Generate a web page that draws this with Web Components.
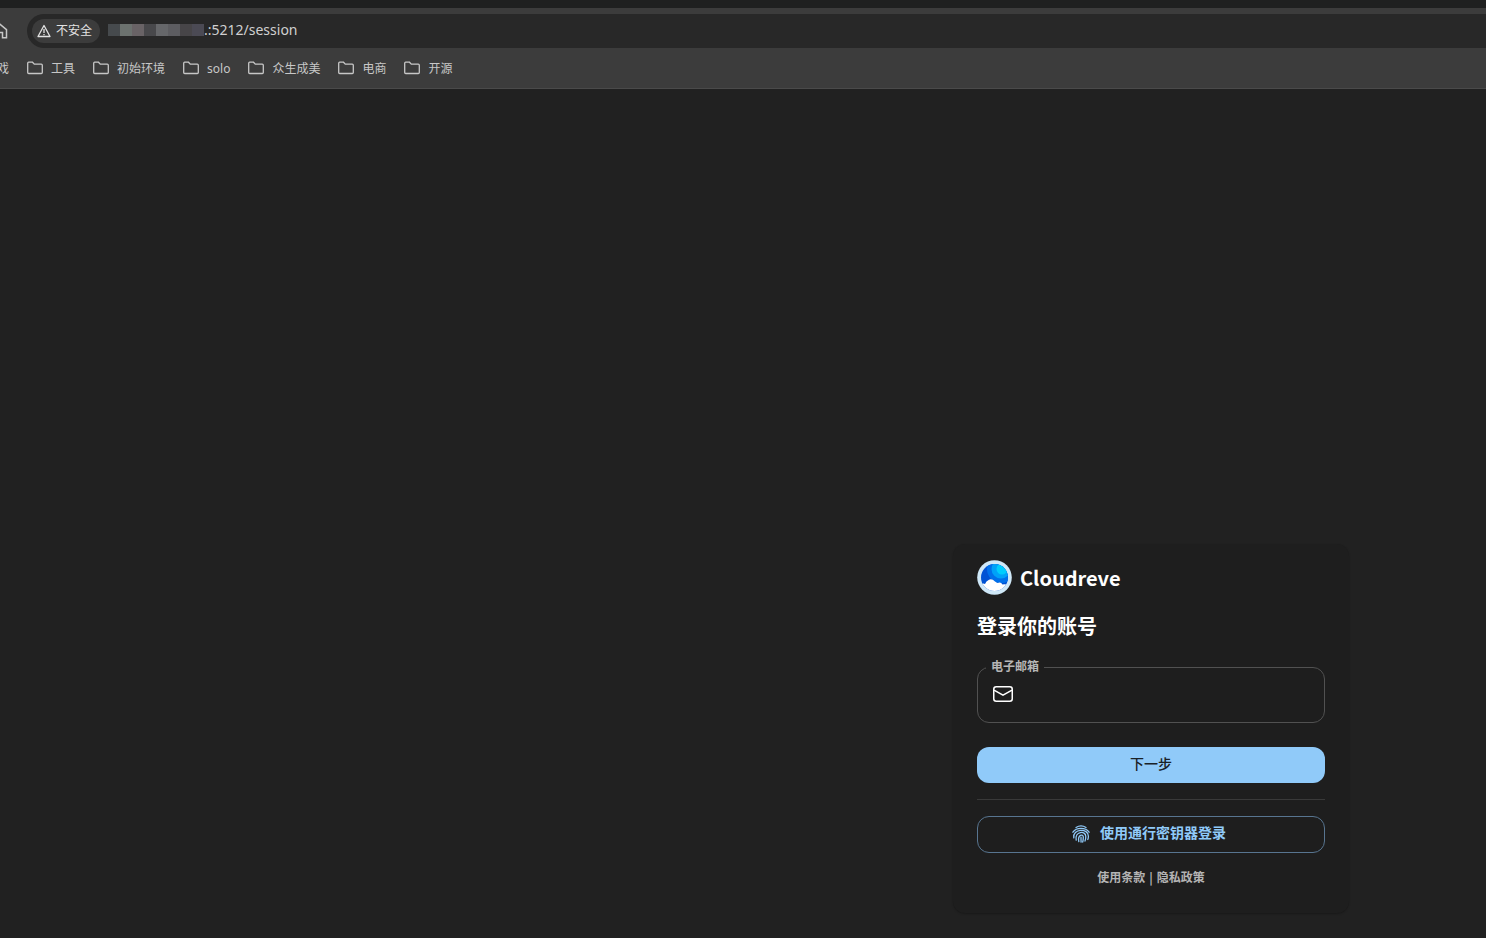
<!DOCTYPE html>
<html lang="zh-CN">
<head>
<meta charset="utf-8">
<meta name="viewport" content="width=device-width, initial-scale=1">
<title>Cloudreve</title>
<style>
html, body {
  height: 100%;
  margin: 0;
}

body {
  display: flex;
  flex-direction: column;
  overflow: hidden;
  background: #212121;
  color: #ffffff;
  font-family: "Noto Sans CJK SC", "Noto Sans", sans-serif;
}
</style>
</head>
<body>

<browser-chrome>
  <address-bar slot="address" status="不安全">.:5212/session</address-bar>
  <bookmark-folder class="cut">戏</bookmark-folder>
  <bookmark-folder>工具</bookmark-folder>
  <bookmark-folder>初始环境</bookmark-folder>
  <bookmark-folder>solo</bookmark-folder>
  <bookmark-folder>众生成美</bookmark-folder>
  <bookmark-folder>电商</bookmark-folder>
  <bookmark-folder>开源</bookmark-folder>
</browser-chrome>

<login-page>
  <login-card>
    <cloud-logo slot="logo">Cloudreve</cloud-logo>
    <span slot="title">登录你的账号</span>
    <outlined-field label="电子邮箱" type="email"></outlined-field>
    <action-button>下一步</action-button>
    <action-button slot="other" variant="outlined">使用通行密钥器登录</action-button>
    <legal-links slot="footer"></legal-links>
  </login-card>
</login-page>

<script>
// makes a template from a string of markup
function makeTemplate(html) {
  const template = document.createElement('template');
  template.innerHTML = html;
  return template;
}

// every element below clones its template into an open shadow root
class BaseElement extends HTMLElement {
  constructor() {
    super();
    const shadow = this.attachShadow({ mode: 'open' });
    shadow.appendChild(this.constructor.template.content.cloneNode(true));
  }
}

// toolbar and bookmarks at the top of the window
class BrowserChrome extends BaseElement {
  static template = makeTemplate(`
<style>
:host {
  display: block;
  flex: none;
  border-top: 8px solid #1f2020;
  border-bottom: 1px solid #4a4a4a;
  background: #3c3c3c;
}

.toolbar {
  display: flex;
  align-items: center;
  gap: 19px;
  padding-top: 6px;
}

.home {
  flex: none;
  width: 16px;
  height: 16px;
  margin-left: -8px;
  padding: 0;
  border: 0;
  background: none;
  color: #c7c7c7;
}

.home svg {
  display: block;
}

slot[name="address"] {
  display: block;
  flex: 1;
}

.bookmarks {
  display: flex;
  align-items: center;
  gap: 18px;
  height: 40px;
  margin-left: -3px;
}
</style>

<div class="toolbar">
  <button class="home" type="button" aria-label="主页">
    <svg width="16" height="16" viewBox="0 0 16 16" fill="none" stroke="currentColor" stroke-width="1.5">
      <path d="M1.5 6.6 8 1.2l6.500 5.400V14.700h-4V9.500h-5v5.200h-4z"/>
    </svg>
  </button>
  <slot name="address"></slot>
</div>
<nav class="bookmarks"><slot></slot></nav>
`);
}
customElements.define('browser-chrome', BrowserChrome);

class AddressBar extends BaseElement {
  static template = makeTemplate(`
<style>
:host {
  display: flex;
  flex: 1;
  align-items: center;
  gap: 8px;
  height: 34px;
  box-sizing: border-box;
  padding-left: 5px;
  border-radius: 17px 0 0 17px;
  background: #282828;
}

.status {
  display: flex;
  align-items: center;
  gap: 5px;
  height: 24px;
  padding: 0 8px 0 5px;
  border: 0;
  border-radius: 12px;
  background: #3c3c3c;
  color: #e3e3e3;
  font: 12px/16px "Noto Sans CJK SC", sans-serif;
}

.status span {
  padding-bottom: 2px;
}

.url {
  display: flex;
  align-items: center;
  padding-bottom: 2px;
  color: #d0d0d0;
  font: 14px/20px "Noto Sans", sans-serif;
}

/* hidden host name */
.mask {
  display: flex;
}

.mask i {
  width: 12px;
  height: 12px;
  background: var(--c);
}
</style>

<button class="status" type="button">
  <svg width="14" height="14" viewBox="0 0 14 14" fill="none" stroke="currentColor" stroke-width="1.300">
    <path d="M7 1.500 13 12.500H1z" stroke-linejoin="round"/>
    <path d="M7 5v4M7 10v1.300"/>
  </svg>
  <span></span>
</button>
<div class="url">
  <div class="mask">
    <i style="--c: #464a4d"></i>
    <i style="--c: #6c726f"></i>
    <i style="--c: #696366"></i>
    <i style="--c: #48484b"></i>
    <i style="--c: #66676a"></i>
    <i style="--c: #5d5d61"></i>
    <i style="--c: #474548"></i>
    <i style="--c: #4b4a54"></i>
  </div>
  <slot></slot>
</div>
`);

  connectedCallback() {
    this.shadowRoot.querySelector('.status span').textContent = this.getAttribute('status');
  }
}
customElements.define('address-bar', AddressBar);

class BookmarkFolder extends BaseElement {
  static template = makeTemplate(`
<style>
:host {
  display: block;
}

button {
  display: flex;
  align-items: center;
  gap: 8px;
  padding: 0;
  border: 0;
  background: none;
  color: #c7c7c7;
  font: 12px/16px "Noto Sans", "Noto Sans CJK SC", sans-serif;
  white-space: nowrap;
}

span {
  padding-top: 2px;
}

/* the first folder has scrolled out, only its label is left */
:host(.cut) svg {
  display: none;
}
</style>

<button type="button">
  <svg width="16" height="14" viewBox="0 0 16 14" fill="none" stroke="currentColor" stroke-width="1.300">
    <path d="M.7 2.200q0-1 1-1h3.800l1.800 2h7q1 0 1 1v7.300q0 1-1 1H1.700q-1 0-1-1z"/>
  </svg>
  <span><slot></slot></span>
</button>
`);
}
customElements.define('bookmark-folder', BookmarkFolder);

// places the card near the bottom right corner
class LoginPage extends BaseElement {
  static template = makeTemplate(`
<style>
:host {
  display: flex;
  flex: 1;
  align-items: flex-end;
  justify-content: flex-end;
  padding: 0 137px 25px 24px;
}
</style>

<slot></slot>
`);
}
customElements.define('login-page', LoginPage);

class LoginCard extends BaseElement {
  static template = makeTemplate(`
<style>
:host {
  display: block;
  box-sizing: border-box;
  width: 100%;
  max-width: 396px;
  padding: 16px 24px 26px;
  border-radius: 12px;
  background: #1e1e1e;
  box-shadow: 0 1px 2px rgba(0, 0, 0, 0.25);
}

h1 {
  margin: 16px 0 20px;
  font-size: 20px;
  font-weight: 700;
  line-height: 30px;
}

form {
  display: grid;
  gap: 24px;
}

hr {
  height: 1px;
  margin: 16px 0;
  border: 0;
  background: #393939;
}

footer {
  margin-top: 14px;
}
</style>

<slot name="logo"></slot>
<h1><slot name="title"></slot></h1>
<form><slot></slot></form>
<hr>
<slot name="other"></slot>
<footer><slot name="footer"></slot></footer>
`);
}
customElements.define('login-card', LoginCard);

class CloudLogo extends BaseElement {
  static template = makeTemplate(`
<style>
:host {
  display: flex;
  align-items: center;
  gap: 8px;
  height: 35px;
  font-size: 20px;
  font-weight: 700;
  line-height: 35px;
}
</style>

<svg width="35" height="35" viewBox="0 0 35 35">
  <defs>
    <clipPath id="disc"><circle cx="17.500" cy="17.500" r="13.500"/></clipPath>
  </defs>
  <circle cx="17.500" cy="17.500" r="17.300" fill="#cfe8f8"/>
  <g clip-path="url(#disc)">
    <path fill="#0052d4" d="M0 0h35v35H0z"/>
    <circle cx="24" cy="9" r="14" fill="#0070ea"/>
    <circle cx="24" cy="9" r="9.500" fill="#00a2f8"/>
    <circle cx="25" cy="9" r="5.500" fill="#00cdfd"/>
    <path fill="#fff" d="M3 35V24.500q3-1.500 5-.5 1-3 4-4.300 3-1.200 6 1.800 2 1.800 3.500 1.300 2.500-.8 4 1.700 2.500-1 7 1V35z"/>
  </g>
</svg>
<slot></slot>
`);
}
customElements.define('cloud-logo', CloudLogo);

class OutlinedField extends BaseElement {
  static template = makeTemplate(`
<style>
:host {
  display: block;
}

fieldset {
  min-width: 0;
  margin: 0;
  padding: 0 15px;
  border: 1px solid #515151;
  border-radius: 12px;
}

legend {
  height: 12px;
  margin-left: -7px;
  padding: 0 5px;
  color: #b6b6b6;
  font-size: 12px;
  font-weight: 700;
  line-height: 10px;
}

.row {
  display: flex;
  align-items: center;
  gap: 12px;
  height: 42px;
  padding-bottom: 7px;
}

input {
  flex: 1;
  min-width: 0;
  padding: 0;
  border: 0;
  outline: 0;
  background: none;
  color: inherit;
  font: inherit;
}
</style>

<fieldset>
  <legend><label for="field"></label></legend>
  <div class="row">
    <svg width="20" height="16" viewBox="0 0 20 16" fill="none" stroke="#fff" stroke-width="1.500">
      <rect x=".75" y=".75" width="18.500" height="14.500" rx="2.500"/>
      <path d="M1 4.200 10 9.200 19 4.200"/>
    </svg>
    <input id="field">
  </div>
</fieldset>
`);

  connectedCallback() {
    this.shadowRoot.querySelector('label').textContent = this.getAttribute('label');
    this.shadowRoot.querySelector('input').type = this.getAttribute('type') || 'text';
  }
}
customElements.define('outlined-field', OutlinedField);

class ActionButton extends BaseElement {
  static template = makeTemplate(`
<style>
:host {
  display: block;
}

button {
  display: flex;
  align-items: center;
  justify-content: center;
  gap: 10px;
  box-sizing: border-box;
  width: 100%;
  height: 36px;
  padding: 0 0 5px;
  border: 0;
  border-radius: 12px;
  background: #90caf9;
  color: #1a2127;
  font: 500 14px/20px "Noto Sans CJK SC", sans-serif;
}

svg {
  display: none;
}

:host([variant="outlined"]) button {
  height: 37px;
  padding-right: 4px;
  border: 1px solid #587590;
  background: none;
  color: #90caf9;
  font-weight: 700;
}

:host([variant="outlined"]) svg {
  display: block;
  margin-top: 4px;
}
</style>

<button type="button">
  <svg width="18" height="18" viewBox="0 0 18 18" fill="none" stroke="currentColor" stroke-width="1.300" stroke-linecap="round">
    <path d="M4 2.500Q9-.6 14 2.500"/>
    <path d="M.9 7.200C4.500 2.200 13.500 2.200 17.100 7.200"/>
    <path d="M1.800 12.800C.2 3.600 16.600 2.800 16.400 11.200q0 2-.6 3.300"/>
    <path d="M4.200 15.200C2.400 6.200 13.800 5.200 13.800 11.500q0 2.600-.8 4.600"/>
    <path d="M6.800 16.600C5.400 9.400 11.300 8.600 11.300 12q0 2.800-.6 5"/>
    <path d="M9 12.200q0 2.600.1 4.900"/>
  </svg>
  <span><slot></slot></span>
</button>
`);
}
customElements.define('action-button', ActionButton);

class LegalLinks extends BaseElement {
  static template = makeTemplate(`
<style>
:host {
  display: flex;
  justify-content: center;
  gap: 4px;
  color: #b4b4b4;
  font-size: 12px;
  font-weight: 700;
  line-height: 20px;
}

a {
  color: inherit;
  text-decoration: none;
}
</style>

<a href="#terms">使用条款</a><span>|</span><a href="#privacy">隐私政策</a>
`);
}
customElements.define('legal-links', LegalLinks);
</script>
</body>
</html>
